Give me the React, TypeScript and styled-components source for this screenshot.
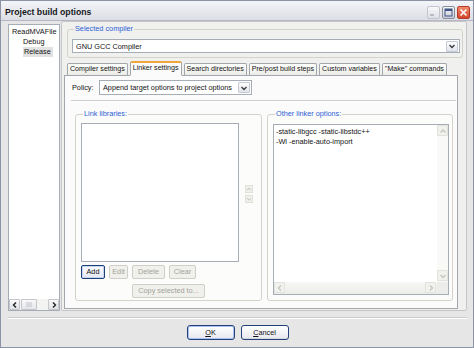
import styled, { createGlobalStyle } from 'styled-components';

const GlobalStyle = createGlobalStyle`
  html, body {
    margin: 0;
    padding: 0;
    background: #e6e6e6;
  }
  body {
    font-family: "Liberation Sans", Arial, sans-serif;
    font-size: 7.3px;
    color: #141414;
  }
  * {
    box-sizing: border-box;
  }
`;

const Window = styled.div`
  width: 474px;
  height: 348px;
  display: flex;
  flex-direction: column;
  background: #e6e6e6;
  border: 1px solid #8d93a6;
  overflow: hidden;
`;

const TitleBar = styled.div`
  height: 20px;
  flex: none;
  display: flex;
  align-items: center;
  padding: 0 3px 0 4px;
  background: linear-gradient(#f4f5f8, #dcdee5);
  border-bottom: 1px solid #b5b8c4;
`;

const Title = styled.div`
  font-weight: bold;
  font-size: 8.7px;
  color: #17181c;
  margin-top: 3px;
`;

const CaptionButtons = styled.div`
  margin-left: auto;
  display: flex;
  gap: 2px;
  margin-top: 4px;
`;

const CaptionButton = styled.div<{ $kind: 'min' | 'max' | 'close' }>`
  width: 13px;
  height: 13px;
  border-radius: 2px;
  display: flex;
  align-items: center;
  justify-content: center;
  border: 1px solid
    ${(p) => (p.$kind === 'close' ? '#b53a26' : p.$kind === 'max' ? '#8a8e9c' : '#c2c4cc')};
  background: ${(p) =>
    p.$kind === 'close'
      ? 'linear-gradient(#f08a6c, #d3452c)'
      : p.$kind === 'max'
        ? 'linear-gradient(#f6f7f9, #c9ccd5)'
        : 'linear-gradient(#f8f8fa, #dfe0e6)'};
`;

const Body = styled.div`
  flex: 1;
  display: flex;
  flex-direction: column;
  padding: 0 6px 0 7px;
`;

const Main = styled.div`
  display: flex;
  gap: 1px;
  height: 290px;
  align-items: flex-start;
`;

const TreePanel = styled.div`
  width: 52px;
  height: 287px;
  margin-top: 3px;
  border: 1px solid #a7adb7;
  background: #fff;
  display: flex;
  flex-direction: column;
`;

const TreeItems = styled.div`
  flex: 1;
  padding-top: 2px;
`;

const TreeItem = styled.div<{ $level: number; $selected?: boolean }>`
  height: 10px;
  line-height: 10px;
  margin-left: ${(p) => (p.$level ? 14 : 3)}px;
  width: ${(p) => (p.$selected ? '30px' : 'auto')};
  padding-left: ${(p) => (p.$selected ? 1 : 0)}px;
  background: ${(p) => (p.$selected ? '#e1e1e1' : 'transparent')};
  white-space: nowrap;
`;

const HScroll = styled.div`
  height: 11px;
  flex: none;
  display: flex;
  background: #f3f3f1;
`;

const ScrollButton = styled.div<{ $faint?: boolean }>`
  width: 11px;
  height: 11px;
  flex: none;
  display: flex;
  align-items: center;
  justify-content: center;
  border: 1px solid ${(p) => (p.$faint ? '#e2e2dc' : '#c4c6cc')};
  border-radius: 1px;
  background: ${(p) => (p.$faint ? '#f1f1ed' : 'linear-gradient(#fafafa, #e2e3e8)')};
`;

const Thumb = styled.div<{ $width: number }>`
  width: ${(p) => p.$width}px;
  margin: 0 1px;
  border: 1px solid #c4c6cc;
  border-radius: 1px;
  background: linear-gradient(#f9f9fa, #e4e5ea);
  display: flex;
  align-items: center;
  justify-content: center;
`;

const Track = styled.div`
  flex: 1;
`;

const OptionsPanel = styled.div`
  width: 406px;
  height: 290px;
  border: 1px solid #c6c6c6;
  border-radius: 2px;
  background: #f0f0ef;
  display: flex;
  flex-direction: column;
`;

const Group = styled.fieldset`
  margin: 0;
  padding: 0;
  min-width: 0;
  border: 1px solid #d3d3c9;
  border-radius: 3px;
  background: #fcfcfb;
`;

const Legend = styled.legend`
  font-size: 7.3px;
  line-height: 8px;
  color: #2d5fd6;
  padding: 0 1px;
  margin-left: 2px;
`;

const CompilerGroup = styled(Group)`
  margin: 3px 3px 0 5px;
  padding: 6px 2px 4px 4px;
  background: transparent;
`;

const Combo = styled.div<{ $width?: number }>`
  display: flex;
  align-items: center;
  height: ${(p) => (p.$width ? 15 : 14)}px;
  width: ${(p) => (p.$width ? `${p.$width}px` : 'auto')};
  border: 1px solid #a7adb7;
  background: #fff;
  padding: 0 1px 0 3px;
`;

const ComboText = styled.span`
  flex: 1;
  white-space: nowrap;
`;

const ComboButton = styled.span`
  width: 12px;
  height: 11px;
  border: 1px solid #c5c9d3;
  border-radius: 1px;
  background: linear-gradient(#fdfdfd, #e1e4ea);
  display: flex;
  align-items: center;
  justify-content: center;
`;

const TabStrip = styled.div`
  display: flex;
  align-items: flex-end;
  gap: 2px;
  margin: 3px 0 0 5px;
  height: 14px;
  position: relative;
  z-index: 1;
`;

const Tab = styled.div<{ $active?: boolean }>`
  height: ${(p) => (p.$active ? 15 : 12)}px;
  line-height: 11px;
  padding: 0 2px;
  font-size: 7.1px;
  border: 1px solid #a2a6ad;
  border-bottom: ${(p) => (p.$active ? '1px solid #fbfbfb' : 'none')};
  border-top: ${(p) => (p.$active ? '2px solid #f0a63a' : '1px solid #a2a6ad')};
  border-radius: 2px 2px 0 0;
  background: ${(p) => (p.$active ? '#fbfbfb' : 'linear-gradient(#ffffff, #ebebe6)')};
  white-space: nowrap;
  margin-bottom: ${(p) => (p.$active ? -1 : 0)}px;
`;

const TabPage = styled.div`
  flex: 1;
  margin: 0 8px 1px 2px;
  border: 1px solid #a2a6ad;
  background: #fbfbfb;
  display: flex;
  flex-direction: column;
`;

const PolicyRow = styled.div`
  display: flex;
  align-items: center;
  padding: 4px 0 0 7px;
`;

const PolicyLabel = styled.span`
  width: 27px;
`;

const Rule = styled.div<{ $inset: string }>`
  height: 2px;
  margin: ${(p) => p.$inset};
  border-top: 1px solid #cdcdcd;
  border-bottom: 1px solid #ffffff;
`;

const Columns = styled.div`
  display: flex;
  gap: 5px;
  margin: 8px 0 0 10px;
  height: 191px;
`;

const LinkGroup = styled(Group)`
  width: 187px;
  padding: 5px 0 2px 5px;
  display: flex;
  flex-direction: column;
`;

const OtherGroup = styled(Group)`
  width: 186px;
  padding: 6px 3px 5px 5px;
  display: flex;
  flex-direction: column;
`;

const ListRow = styled.div`
  display: flex;
  gap: 6px;
  align-items: center;
`;

const ListBox = styled.div`
  width: 158px;
  height: 139px;
  border: 1px solid #a7adb7;
  background: #fff;
`;

const Spinner = styled.div`
  display: flex;
  flex-direction: column;
  gap: 2px;
  margin-top: 2px;
`;

const SpinButton = styled.div`
  width: 8px;
  height: 8px;
  border: 1px solid #e0e0da;
  background: #f1f1ec;
  display: flex;
  align-items: center;
  justify-content: center;
`;

const ButtonRow = styled.div`
  display: flex;
  gap: 4px;
  margin-top: 3px;
`;

const SmallButton = styled.div<{ $enabled?: boolean; $width: number }>`
  width: ${(p) => p.$width}px;
  height: 14px;
  line-height: 12px;
  text-align: center;
  border-radius: 2px;
  border: 1px solid ${(p) => (p.$enabled ? '#1f3f78' : '#cfcfc8')};
  background: ${(p) => (p.$enabled ? 'linear-gradient(#ffffff, #e4e6f2)' : '#f0f0ec')};
  box-shadow: ${(p) => (p.$enabled ? 'inset 0 0 0 1px #c6d4f2' : 'none')};
  color: ${(p) => (p.$enabled ? '#111' : '#a3a39b')};
  white-space: nowrap;
`;

const CopyButton = styled(SmallButton)`
  align-self: center;
  margin: 5px 0 0 -5px;
`;

const TextArea = styled.div`
  flex: 1;
  border: 1px solid #a7adb7;
  background: #fff;
  display: grid;
  grid-template-columns: 1fr 11px;
  grid-template-rows: 1fr 12px;
`;

const TextContent = styled.div`
  padding: 2px 0 0 2px;
  line-height: 10px;
  white-space: pre;
`;

const VScroll = styled.div`
  display: flex;
  flex-direction: column;
  justify-content: space-between;
  background: #f9f9f7;
  padding-bottom: 1px;
`;

const HBar = styled.div`
  display: flex;
  justify-content: space-between;
  background: linear-gradient(#f7f7f5, #ecece8);
  padding-right: 1px;
`;

const Corner = styled.div`
  background: #ececea;
`;

const Footer = styled.div`
  display: flex;
  justify-content: center;
  gap: 6px;
  padding-top: 6px;
`;

const DialogButton = styled.div<{ $default?: boolean }>`
  width: 48px;
  height: 15px;
  line-height: 13px;
  text-align: center;
  border: 1px solid #23407a;
  border-radius: 3px;
  background: linear-gradient(#ffffff, #e6e7ee);
  box-shadow: ${(p) => (p.$default ? 'inset 0 0 0 1px #a9c2f0' : 'inset 0 -1px 0 #d6d7de')};
  font-size: 7.3px;
`;

const Mnemonic = styled.span`
  text-decoration: underline;
`;

function Chevron({ dir, color = '#3c3c3c' }: { dir: 'up' | 'down' | 'left' | 'right'; color?: string }) {
  const paths = {
    up: 'M1.5 5.5 L4 3 L6.5 5.5',
    down: 'M1.5 3 L4 5.5 L6.5 3',
    left: 'M5 1.5 L2.5 4 L5 6.5',
    right: 'M3 1.5 L5.5 4 L3 6.5',
  };
  return (
    <svg width="8" height="8" viewBox="0 0 8 8">
      <path d={paths[dir]} fill="none" stroke={color} strokeWidth="1.4" />
    </svg>
  );
}

function App() {
  return (
    <>
      <GlobalStyle />
      <Window>
        <TitleBar>
          <Title>Project build options</Title>
          <CaptionButtons>
            <CaptionButton $kind="min">
              <svg width="9" height="9" viewBox="0 0 9 9">
                <rect x="1" y="6" width="4" height="2" fill="#b8bac2" />
              </svg>
            </CaptionButton>
            <CaptionButton $kind="max">
              <svg width="9" height="9" viewBox="0 0 9 9">
                <rect x="1" y="1" width="7" height="7" fill="none" stroke="#3f5586" strokeWidth="1" />
                <rect x="1" y="1" width="7" height="2" fill="#3f5586" />
              </svg>
            </CaptionButton>
            <CaptionButton $kind="close">
              <svg width="9" height="9" viewBox="0 0 9 9">
                <path d="M1.5 1.5 L7.5 7.5 M7.5 1.5 L1.5 7.5" stroke="#fff" strokeWidth="1.6" />
              </svg>
            </CaptionButton>
          </CaptionButtons>
        </TitleBar>
        <Body>
          <Main>
            <TreePanel>
              <TreeItems>
                <TreeItem $level={0}>ReadMVAFile</TreeItem>
                <TreeItem $level={1}>Debug</TreeItem>
                <TreeItem $level={1} $selected>
                  Release
                </TreeItem>
              </TreeItems>
              <HScroll>
                <ScrollButton>
                  <Chevron dir="left" color="#222" />
                </ScrollButton>
                <Thumb $width={16}>
                  <svg width="6" height="5" viewBox="0 0 6 5">
                    <path d="M1 0 V5 M3 0 V5 M5 0 V5" stroke="#c2c4ca" strokeWidth="1" />
                  </svg>
                </Thumb>
                <Track />
                <ScrollButton>
                  <Chevron dir="right" color="#222" />
                </ScrollButton>
              </HScroll>
            </TreePanel>

            <OptionsPanel>
              <CompilerGroup>
                <Legend>Selected compiler</Legend>
                <Combo>
                  <ComboText>GNU GCC Compiler</ComboText>
                  <ComboButton>
                    <Chevron dir="down" />
                  </ComboButton>
                </Combo>
              </CompilerGroup>

              <TabStrip>
                <Tab>Compiler settings</Tab>
                <Tab $active>Linker settings</Tab>
                <Tab>Search directories</Tab>
                <Tab>Pre/post build steps</Tab>
                <Tab>Custom variables</Tab>
                <Tab>"Make" commands</Tab>
              </TabStrip>

              <TabPage>
                <PolicyRow>
                  <PolicyLabel>Policy:</PolicyLabel>
                  <Combo $width={153}>
                    <ComboText>Append target options to project options</ComboText>
                    <ComboButton>
                      <Chevron dir="down" />
                    </ComboButton>
                  </Combo>
                </PolicyRow>
                <Rule $inset="5px 1px 0 6px" />

                <Columns>
                  <LinkGroup>
                    <Legend>Link libraries:</Legend>
                    <ListRow>
                      <ListBox />
                      <Spinner>
                        <SpinButton>
                          <Chevron dir="up" color="#c9c9c2" />
                        </SpinButton>
                        <SpinButton>
                          <Chevron dir="down" color="#c9c9c2" />
                        </SpinButton>
                      </Spinner>
                    </ListRow>
                    <ButtonRow>
                      <SmallButton $enabled $width={24}>
                        Add
                      </SmallButton>
                      <SmallButton $width={19}>Edit</SmallButton>
                      <SmallButton $width={33}>Delete</SmallButton>
                      <SmallButton $width={27}>Clear</SmallButton>
                    </ButtonRow>
                    <CopyButton $width={73}>Copy selected to...</CopyButton>
                  </LinkGroup>

                  <OtherGroup>
                    <Legend>Other linker options:</Legend>
                    <TextArea>
                      <TextContent>{'-static-libgcc -static-libstdc++\n-Wl -enable-auto-import'}</TextContent>
                      <VScroll>
                        <ScrollButton $faint>
                          <Chevron dir="up" color="#c6c6bf" />
                        </ScrollButton>
                        <ScrollButton $faint>
                          <Chevron dir="down" color="#c6c6bf" />
                        </ScrollButton>
                      </VScroll>
                      <HBar>
                        <ScrollButton $faint>
                          <Chevron dir="left" color="#c6c6bf" />
                        </ScrollButton>
                        <ScrollButton $faint>
                          <Chevron dir="right" color="#c6c6bf" />
                        </ScrollButton>
                      </HBar>
                      <Corner />
                    </TextArea>
                  </OtherGroup>
                </Columns>
              </TabPage>
            </OptionsPanel>
          </Main>

          <Rule $inset="6px 0 0 0" />

          <Footer>
            <DialogButton $default>
              <Mnemonic>O</Mnemonic>K
            </DialogButton>
            <DialogButton>
              <Mnemonic>C</Mnemonic>ancel
            </DialogButton>
          </Footer>
        </Body>
      </Window>
    </>
  );
}

export default App;
